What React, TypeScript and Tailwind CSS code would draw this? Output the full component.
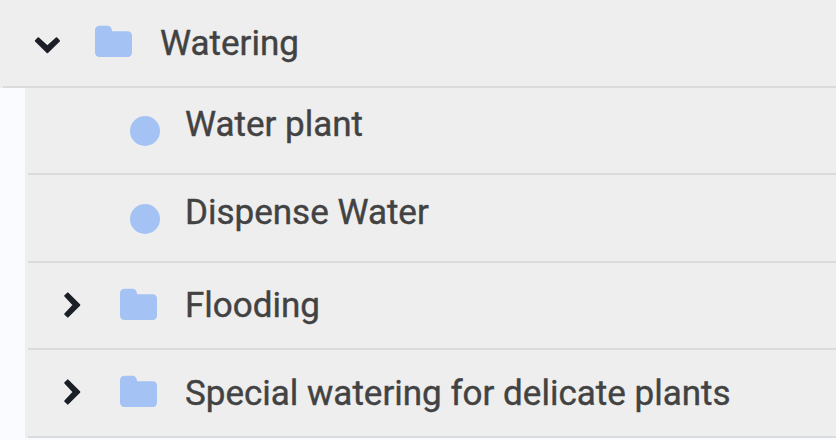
function Folder({ className }: { className: string }) {
  return (
    <svg viewBox="0 0 37 33" className={`h-[33px] w-[37px] shrink-0 ${className}`} fill="#a4c2f4">
      <path d="M5 0.7H12C15 0.7 17 2.7 17 6.2H32.5Q37 6.2 37 10.9V27.2Q37 32 32.5 32H5Q0 32 0 27.2V5.5Q0 0.7 5 0.7Z" />
    </svg>
  );
}

function Chevron({ open, className }: { open?: boolean; className: string }) {
  return (
    <svg viewBox="0 0 28 28" className={`size-7 shrink-0 ${className}`} fill="#1b1f26" stroke="#1b1f26" strokeWidth="1.8" strokeLinejoin="round">
      <path d="M5.3 7.1L14.4 15.5L23.5 7.1L26.1 9.8L14.4 21.4L2.7 9.8Z" transform={open ? undefined : "translate(0 28.4) rotate(-90)"} />
    </svg>
  );
}

const label = "whitespace-nowrap [-webkit-text-stroke:0.4px_#424242]";

function Divider() {
  return <div className="mt-auto ml-[3px] h-0.5 shrink-0 bg-[#dadbdc]" />;
}

const leaves = [
  { text: "Water plant", row: "h-[87px]", pad: "pt-[17px]" },
  { text: "Dispense Water", row: "h-[88px]", pad: "pt-[18px]" },
];

const folders = [
  { text: "Flooding", row: "h-[87px]", shift: "" },
  { text: "Special watering for delicate plants", row: "h-[88px]", shift: "mt-px" },
];

export default function App() {
  return (
    <div className="h-[440px] w-[836px] overflow-hidden bg-[#f9fbfe] font-['Roboto',sans-serif] text-[35px] leading-[40px] text-[#424242]">
      <div className="flex h-[88px] flex-col bg-[#eeeeee]">
        <div className="flex items-start pt-[24px]">
          <Chevron open className="mt-[7px] ml-[33px]" />
          <Folder className="mt-px ml-[34px]" />
          <span className={`ml-[28px] ${label}`}>Watering</span>
        </div>
        <Divider />
      </div>
      <div className="ml-[25px] bg-[#eeeeee]">
        {leaves.map((r) => (
          <div key={r.text} className={`flex flex-col ${r.row}`}>
            <div className={`flex items-start ${r.pad}`}>
              <span className="mt-[11px] ml-[105px] size-[30px] rounded-full bg-[#a4c2f4]" />
              <span className={`ml-[25px] ${label}`}>{r.text}</span>
            </div>
            <Divider />
          </div>
        ))}
        {folders.map((r) => (
          <div key={r.text} className={`flex flex-col ${r.row}`}>
            <div className="flex items-start pt-[23px]">
              <Chevron className="mt-[5px] ml-[33px]" />
              <Folder className="mt-[2px] ml-[34px]" />
              <span className={`ml-[28px] ${label} ${r.shift}`}>{r.text}</span>
            </div>
            <Divider />
          </div>
        ))}
      </div>
    </div>
  );
}
